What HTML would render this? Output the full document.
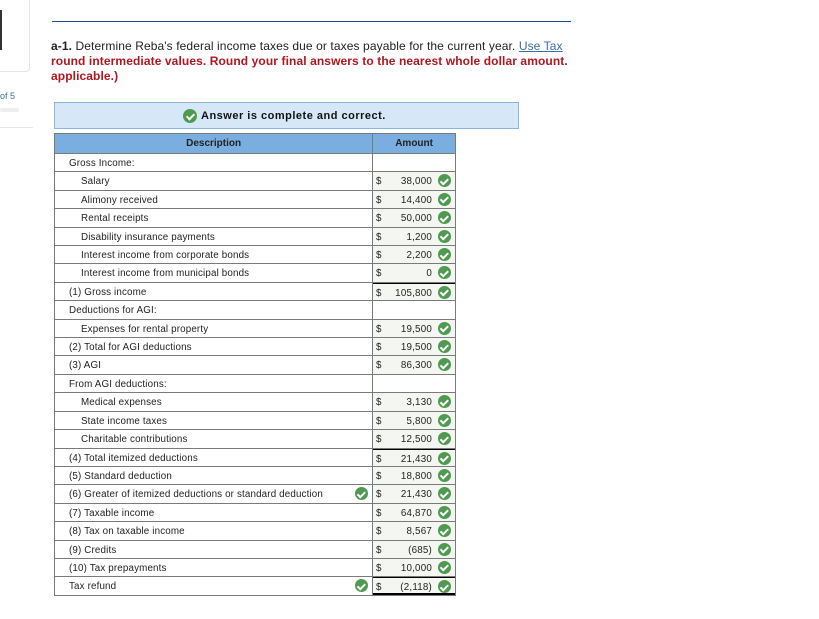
<!DOCTYPE html>
<html><head><meta charset="utf-8"><style>
body{margin:0;width:819px;height:619px;background:#fff;font-family:"Liberation Sans",Arial,sans-serif;position:relative;overflow:hidden}
.abs{position:absolute}
.tbl{position:absolute;left:54px;top:133px;width:400px;border:1px solid #7a7a7a;border-bottom:none}
.hd{display:flex;height:19px;background:#7aaee0;font-weight:bold;font-size:10px;color:#222;border-bottom:1px solid #7a7a7a}
.hd div{line-height:20px;text-align:center}
.r{display:flex;height:18.42px;box-sizing:border-box;border-bottom:1px solid #7a7a7a;font-size:9.8px;color:#222}
.d{width:318px;border-right:1px solid #7a7a7a;line-height:19px;padding-left:14px;box-sizing:border-box;position:relative;letter-spacing:.15px}
.d.i{padding-left:26px}
.a{width:82px;position:relative;line-height:19px;background:#f3f6f1;letter-spacing:.2px}
.a.e{background:#fff}
.a .s{position:absolute;left:3px}
.a .v{position:absolute;right:23px}
.ck{position:absolute;width:13px;height:13px;border-radius:50%;background:#4e9a4e;top:2px}
.ck:after{content:"";position:absolute;left:4px;top:2.5px;width:3px;height:5.5px;border:solid #fff;border-width:0 2px 2px 0;transform:rotate(45deg)}
.a .ck{right:4px}
.d .ck{right:4px}
.tt{border-top:1.5px solid #000}
</style></head><body>
<div class="abs" style="left:-4px;top:-4px;width:32px;height:74px;border:1px solid #e4e4e4;border-radius:4px"></div>
<div class="abs" style="left:-2px;top:10px;width:4px;height:40px;background:#333"></div>
<div class="abs" style="left:0;top:91px;font-size:9px;color:#3a6ea5">of 5</div>
<div class="abs" style="left:0;top:108px;width:19px;height:4px;background:#eee;border-radius:2px"></div>
<div class="abs" style="left:0;top:127px;width:33px;height:1px;background:#e4e4e4"></div>
<div class="abs" style="left:52px;top:21px;width:519px;height:1px;background:#1f4f8a"></div>
<div class="abs" style="left:51px;top:39px;width:520px;font-size:12px;line-height:15px;white-space:nowrap;overflow:hidden;color:#222;letter-spacing:.1px">
<b>a-1.</b> Determine Reba's federal income taxes due or taxes payable for the current year. <span style="color:#3a6ea5;text-decoration:underline">Use Tax</span><br>
<span style="color:#b0161e;font-weight:bold">round intermediate values. Round your final answers to the nearest whole dollar amount. L<br>applicable.)</span></div>
<div class="abs" style="left:54px;top:102px;width:465px;height:27px;background:#d6e8f7;border:1px solid #8ab5dc;box-sizing:border-box"></div>
<div class="abs" style="left:183px;top:109px;width:14px;height:14px;border-radius:50%;background:#4e9a4e"></div>
<div class="abs" style="left:188px;top:111.5px;width:3px;height:6px;border:solid #fff;border-width:0 2px 2px 0;transform:rotate(45deg)"></div>
<div class="abs" style="left:201px;top:110px;font-size:11px;font-weight:bold;letter-spacing:.5px;color:#111">Answer is complete and correct.</div>
<div class="tbl">
<div class="hd"><div style="width:318px;border-right:1px solid #7a7a7a">Description</div><div style="width:82px">Amount</div></div>
<div class="r"><div class="d">Gross Income:</div><div class="a e"></div></div>
<div class="r"><div class="d i">Salary</div><div class="a"><span class="s">$</span><span class="v">38,000</span><i class="ck"></i></div></div>
<div class="r"><div class="d i">Alimony received</div><div class="a"><span class="s">$</span><span class="v">14,400</span><i class="ck"></i></div></div>
<div class="r"><div class="d i">Rental receipts</div><div class="a"><span class="s">$</span><span class="v">50,000</span><i class="ck"></i></div></div>
<div class="r"><div class="d i">Disability insurance payments</div><div class="a"><span class="s">$</span><span class="v">1,200</span><i class="ck"></i></div></div>
<div class="r"><div class="d i">Interest income from corporate bonds</div><div class="a"><span class="s">$</span><span class="v">2,200</span><i class="ck"></i></div></div>
<div class="r"><div class="d i">Interest income from municipal bonds</div><div class="a"><span class="s">$</span><span class="v">0</span><i class="ck"></i></div></div>
<div class="r"><div class="d">(1) Gross income</div><div class="a tt"><span class="s">$</span><span class="v">105,800</span><i class="ck"></i></div></div>
<div class="r"><div class="d">Deductions for AGI:</div><div class="a e"></div></div>
<div class="r"><div class="d i">Expenses for rental property</div><div class="a"><span class="s">$</span><span class="v">19,500</span><i class="ck"></i></div></div>
<div class="r"><div class="d">(2) Total for AGI deductions</div><div class="a"><span class="s">$</span><span class="v">19,500</span><i class="ck"></i></div></div>
<div class="r"><div class="d">(3) AGI</div><div class="a"><span class="s">$</span><span class="v">86,300</span><i class="ck"></i></div></div>
<div class="r"><div class="d">From AGI deductions:</div><div class="a e"></div></div>
<div class="r"><div class="d i">Medical expenses</div><div class="a"><span class="s">$</span><span class="v">3,130</span><i class="ck"></i></div></div>
<div class="r"><div class="d i">State income taxes</div><div class="a"><span class="s">$</span><span class="v">5,800</span><i class="ck"></i></div></div>
<div class="r"><div class="d i">Charitable contributions</div><div class="a"><span class="s">$</span><span class="v">12,500</span><i class="ck"></i></div></div>
<div class="r"><div class="d">(4) Total itemized deductions</div><div class="a tt"><span class="s">$</span><span class="v">21,430</span><i class="ck"></i></div></div>
<div class="r"><div class="d">(5) Standard deduction</div><div class="a"><span class="s">$</span><span class="v">18,800</span><i class="ck"></i></div></div>
<div class="r"><div class="d">(6) Greater of itemized deductions or standard deduction<i class="ck"></i></div><div class="a"><span class="s">$</span><span class="v">21,430</span><i class="ck"></i></div></div>
<div class="r"><div class="d">(7) Taxable income</div><div class="a"><span class="s">$</span><span class="v">64,870</span><i class="ck"></i></div></div>
<div class="r"><div class="d">(8) Tax on taxable income</div><div class="a"><span class="s">$</span><span class="v">8,567</span><i class="ck"></i></div></div>
<div class="r"><div class="d">(9) Credits</div><div class="a"><span class="s">$</span><span class="v">(685)</span><i class="ck"></i></div></div>
<div class="r"><div class="d">(10) Tax prepayments</div><div class="a"><span class="s">$</span><span class="v">10,000</span><i class="ck"></i></div></div>
<div class="r"><div class="d">Tax refund<i class="ck"></i></div><div class="a tt" style="border-bottom:2px solid #000"><span class="s">$</span><span class="v">(2,118)</span><i class="ck"></i></div></div>
</div>
</body></html>
